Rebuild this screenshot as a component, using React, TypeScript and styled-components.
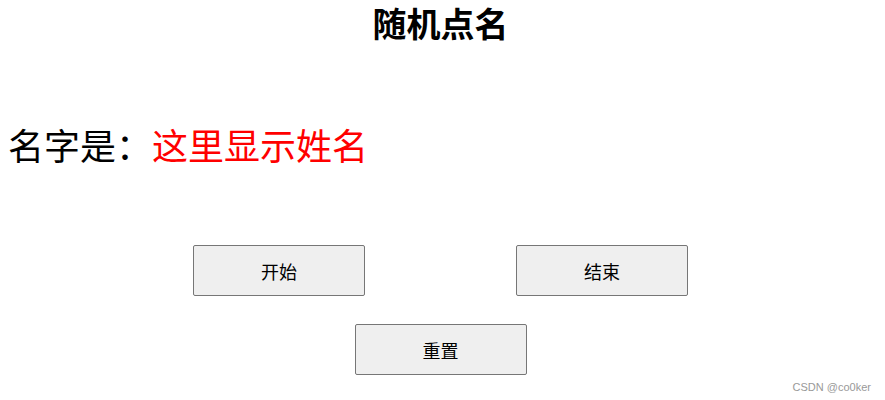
import styled, { createGlobalStyle } from 'styled-components';

const GlobalStyle = createGlobalStyle`
	html, body {
		margin: 0;
		padding: 0;
		background: #ffffff;
	}
	body {
		font-family: "Noto Sans CJK SC", "Noto Sans", sans-serif;
		color: #000000;
	}
`;

const Page = styled.div`
	position: relative;
	width: 885px;
	height: 400px;
	padding: 0 12px 0 8px;
	box-sizing: border-box;
	overflow: hidden;
`;

const Title = styled.h1`
	margin: 0;
	font-size: 34px;
	line-height: 46px;
	font-weight: 700;
	text-align: center;
`;

const NameLine = styled.div`
	margin-top: 73px;
	font-size: 36px;
	line-height: 50px;
`;

const NameValue = styled.span`
	color: #ff0000;
`;

const ButtonRow = styled.div`
	display: flex;
	justify-content: center;
	gap: ${(props: { gap?: number; top?: number }) => props.gap ?? 0}px;
	margin-top: ${(props: { top?: number; gap?: number }) => props.top ?? 0}px;
`;

const Button = styled.button`
	width: 172px;
	height: 51px;
	padding: 0;
	font-family: "Noto Sans CJK SC", "Noto Sans", sans-serif;
	font-size: 18px;
	color: #000000;
	background: #efefef;
	border: 1px solid #767676;
	border-radius: 2px;
	cursor: pointer;
`;

const Watermark = styled.div`
	position: absolute;
	right: 14px;
	bottom: 7px;
	font-family: "Liberation Sans", Arial, sans-serif;
	font-size: 11px;
	color: #999999;
`;

export default function App() {
	return (
		<>
			<GlobalStyle />
			<Page>
				<Title>随机点名</Title>
				<NameLine>
					名字是：<NameValue>这里显示姓名</NameValue>
				</NameLine>
				<ButtonRow top={76} gap={151}>
					<Button>开始</Button>
					<Button>结束</Button>
				</ButtonRow>
				<ButtonRow top={28}>
					<Button>重置</Button>
				</ButtonRow>
				<Watermark>CSDN @co0ker</Watermark>
			</Page>
		</>
	);
}
